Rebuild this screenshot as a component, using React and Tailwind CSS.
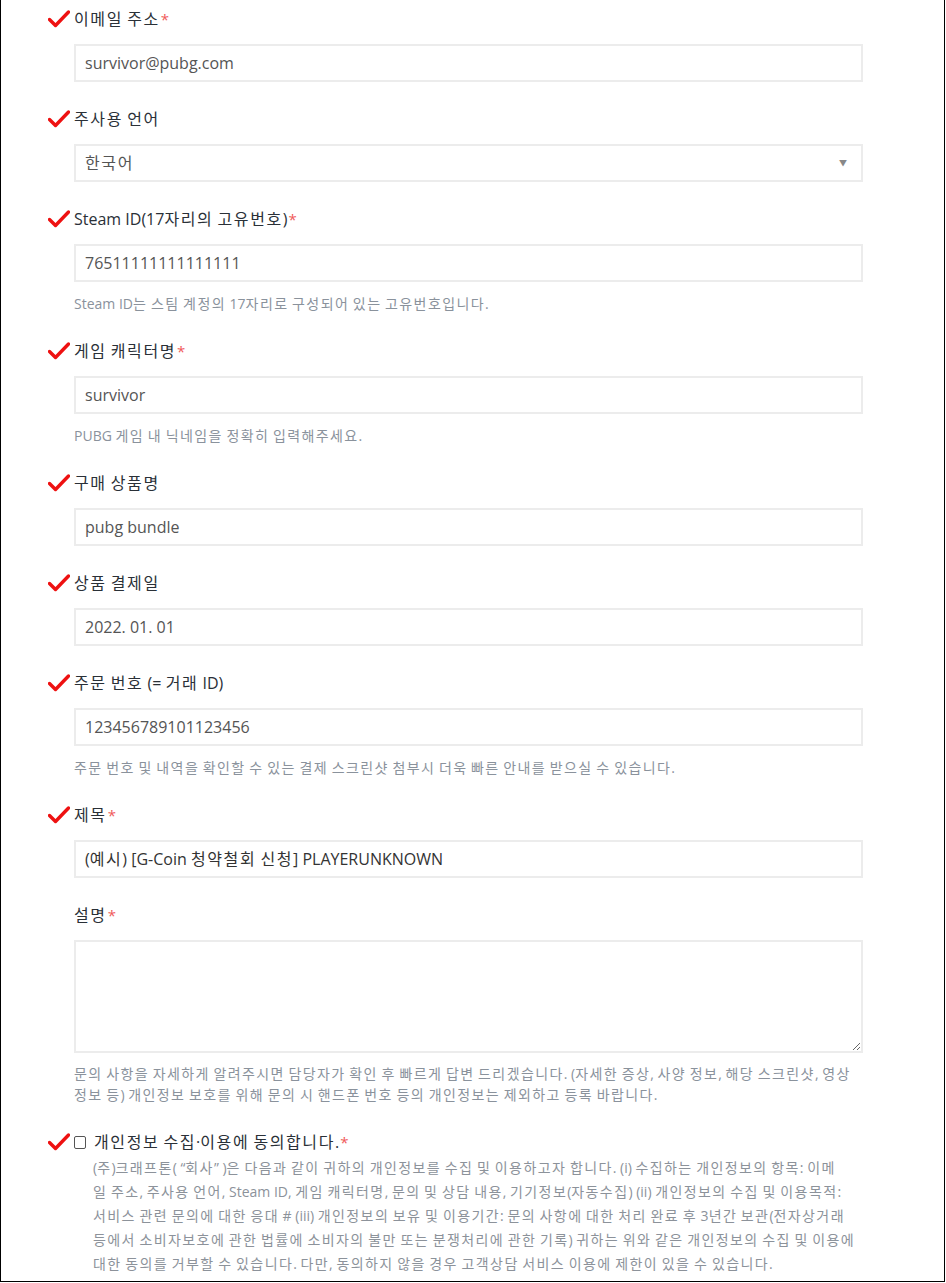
import React from 'react';

const font = { fontFamily: '"Open Sans", "Noto Sans CJK KR", sans-serif' };

// Hangul runs get a little extra spacing so widths match the reference
const ko = (text) =>
  text.split(/([\u1100-\u11ff\u3131-\u318e\uac00-\ud7a3]+)/).map((part, i) =>
    i % 2 === 1 ? (
      <span key={i} className="tracking-[0.1em]">
        {part}
      </span>
    ) : (
      part
    ),
  );

const Check = () => (
  <svg
    viewBox="0 0 22 18"
    className="w-[22px] h-[18px] -ml-[26px] mr-[4px] shrink-0"
    fill="none"
  >
    <path
      d="M1.5 9.5 L7.5 15.5 L20.5 2"
      stroke="#ee1111"
      strokeWidth="3.4"
      strokeLinecap="round"
      strokeLinejoin="round"
    />
  </svg>
);

const Star = () => <span className="text-[#f05a5a] ml-[1px] text-[15px]">*</span>;

const Label = ({ text, required, check = true }) => (
  <div className="flex items-center h-6 text-[16px] text-[#2a3037]">
    {check && <Check />}
    <span>{ko(text)}</span>
    {required && <Star />}
  </div>
);

const Input = ({ value, dark }) => (
  <div
    className={`mt-[13px] h-[38px] border-2 border-[#ececec] px-[9px] flex items-center text-[16px] ${
      dark ? 'text-[#333]' : 'text-[#555]'
    }`}
  >
    <span>{ko(value)}</span>
  </div>
);

const Help = ({ children }) => (
  <p className="mt-[11px] text-[14px] leading-[21px] text-[#8a929c]">{ko(children)}</p>
);

const fields = [
  { label: '이메일 주소', required: true, value: 'survivor@pubg.com' },
  { label: '주사용 언어', value: '한국어', select: true },
  {
    label: 'Steam ID(17자리의 고유번호)',
    required: true,
    value: '76511111111111111',
    help: 'Steam ID는 스팀 계정의 17자리로 구성되어 있는 고유번호입니다.',
  },
  {
    label: '게임 캐릭터명',
    required: true,
    value: 'survivor',
    help: 'PUBG 게임 내 닉네임을 정확히 입력해주세요.',
  },
  { label: '구매 상품명', value: 'pubg bundle' },
  { label: '상품 결제일', value: '2022. 01. 01' },
  {
    label: '주문 번호 (= 거래 ID)',
    value: '123456789101123456',
    help: '주문 번호 및 내역을 확인할 수 있는 결제 스크린샷 첨부시 더욱 빠른 안내를 받으실 수 있습니다.',
  },
  {
    label: '제목',
    required: true,
    value: '(예시) [G-Coin 청약철회 신청] PLAYERUNKNOWN',
    dark: true,
  },
];

const descLines = [
  '문의 사항을 자세하게 알려주시면 담당자가 확인 후 빠르게 답변 드리겠습니다. (자세한 증상, 사양 정보, 해당 스크린샷, 영상',
  '정보 등) 개인정보 보호를 위해 문의 시 핸드폰 번호 등의 개인정보는 제외하고 등록 바랍니다.',
];

const privacyLines = [
  '(주)크래프톤( “회사” )은 다음과 같이 귀하의 개인정보를 수집 및 이용하고자 합니다. (i) 수집하는 개인정보의 항목: 이메',
  '일 주소, 주사용 언어, Steam ID, 게임 캐릭터명, 문의 및 상담 내용, 기기정보(자동수집) (ii) 개인정보의 수집 및 이용목적:',
  '서비스 관련 문의에 대한 응대 # (iii) 개인정보의 보유 및 이용기간: 문의 사항에 대한 처리 완료 후 3년간 보관(전자상거래',
  '등에서 소비자보호에 관한 법률에 소비자의 불만 또는 분쟁처리에 관한 기록) 귀하는 위와 같은 개인정보의 수집 및 이용에',
  '대한 동의를 거부할 수 있습니다. 다만, 동의하지 않을 경우 고객상담 서비스 이용에 제한이 있을 수 있습니다.',
];

export default function App() {
  return (
    <div className="w-[946px] h-[1283px] overflow-hidden bg-white" style={font}>
      <div className="w-[945px] h-[1282px] border-l border-r border-b border-black overflow-hidden">
        <div className="ml-[73px] w-[789px] pt-[7px]">
          {fields.map((f) => (
            <div key={f.label} className="mb-[25px]">
              <Label text={f.label} required={f.required} />
              {f.select ? (
                <div className="mt-[13px] h-[38px] border-2 border-[#ececec] pl-[9px] pr-[14px] flex items-center justify-between text-[16px] text-[#555]">
                  <span>{ko(f.value)}</span>
                  <span className="text-[8px] text-[#888]">▼</span>
                </div>
              ) : (
                <Input value={f.value} dark={f.dark} />
              )}
              {f.help && <Help>{f.help}</Help>}
            </div>
          ))}

          <div className="mb-[25px]">
            <Label text="설명" required check={false} />
            <textarea
              className="mt-[13px] block w-full h-[113px] border-2 border-[#ececec] outline-none"
              defaultValue=""
            />
            <div className="mt-[10px] w-[800px] text-[14px] leading-[21px] text-[#8a929c] whitespace-nowrap">
              {descLines.map((l) => (
                <div key={l}>{ko(l)}</div>
              ))}
            </div>
          </div>

          <div>
            <div className="flex items-center h-6 text-[16px] text-[#2a3037]">
              <Check />
              <span className="w-[12px] h-[13px] border border-[#555] rounded-[2px] mr-[8px] shrink-0" />
              <span>{ko('개인정보 수집·이용에 동의합니다.')}</span>
              <Star />
            </div>
            <div className="mt-[2px] ml-[19px] w-[800px] text-[14px] leading-[24px] text-[#8c929a] whitespace-nowrap">
              {privacyLines.map((l) => (
                <div key={l}>{ko(l)}</div>
              ))}
            </div>
          </div>
        </div>
      </div>
    </div>
  );
}
